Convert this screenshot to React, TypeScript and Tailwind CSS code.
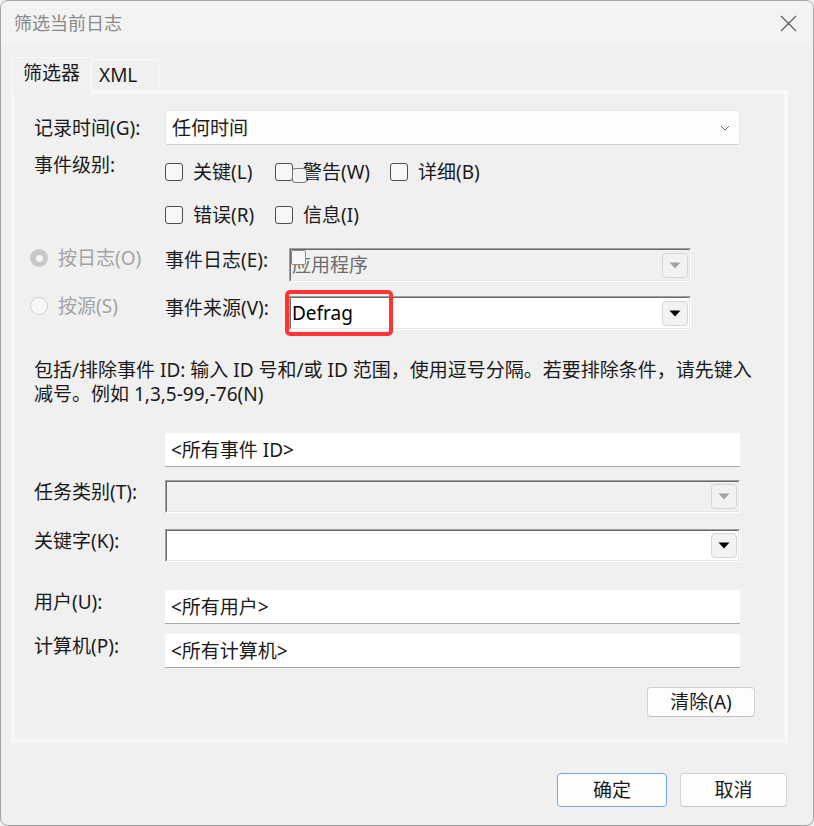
import React from "react";

/** Win32 style sunken combo box (classic 3D border). */
function SunkenCombo({
  value,
  disabled,
  width,
  height,
  children,
}: {
  value?: string;
  disabled?: boolean;
  width: string;
  height: string;
  children?: React.ReactNode;
}) {
  return (
    <div
      className={`relative border-l border-t border-b border-r border-l-[#a0a0a0] border-t-[#a0a0a0] border-r-white border-b-white ${width} ${height}`}
    >
      <div
        className={`flex h-full items-center border-l border-t border-b border-r border-l-[#6a6a6a] border-t-[#6a6a6a] border-r-[#e6e6e6] border-b-[#e6e6e6] ${
          disabled ? "bg-[#f0f0f0]" : "bg-white"
        }`}
      >
        <span
          className={`flex-1 truncate pl-[1px] leading-[24px] ${
            disabled ? "text-[#6d6d6d]" : "text-black"
          }`}
        >
          {value}
        </span>
        <span className="mr-[1px] flex h-[25px] w-[26px] items-center justify-center rounded-[4px] border border-[#d6d6d6] bg-[#f2f2f2]">
          <svg width="12" height="7" viewBox="0 0 12 7">
            <path d="M0.5 0.5h11L6 6.5z" fill={disabled ? "#a3a3a3" : "#000"} />
          </svg>
        </span>
      </div>
      {children}
    </div>
  );
}

function Checkbox({ label, width, children }: { label: string; width: string; children?: React.ReactNode }) {
  return (
    <div className={`relative flex h-[24px] items-center gap-[10px] ${width}`}>
      <span className="h-[18px] w-[18px] shrink-0 rounded-[3px] border border-[#4d4d4d] bg-[#f7f7f7]" />
      <span className="leading-[24px]">{label}</span>
      {children}
    </div>
  );
}

function TextBox({ value }: { value: string }) {
  return (
    <div className="flex h-[34px] w-[575px] items-center border-b border-[#a8a8a8] bg-white pl-[6px] leading-[24px]">
      {value}
    </div>
  );
}

export default function App() {
  return (
    <div className="h-[826px] w-[814px] bg-[#f0f0f0] font-['Noto_Sans','Noto_Sans_CJK_SC',sans-serif] text-[19px] text-[#1a1a1a]">
      <div className="flex h-full w-full flex-col overflow-hidden rounded-[8px] border border-[#a3a3a3]">
        {/* title bar */}
        <div className="flex h-[45px] shrink-0 items-center justify-between bg-[#f3f3f3] pl-[13px] pr-[16px]">
          <span className="text-[18px] text-[#8a8a8a]">筛选当前日志</span>
          <svg width="17" height="17" viewBox="0 0 17 17">
            <path d="M1 1l15 15M16 1L1 16" stroke="#5c5c5c" strokeWidth="1.2" />
          </svg>
        </div>

        {/* tabs */}
        <div className="ml-[10px] mt-[11px] flex h-[33px] items-start">
          <div className="relative z-10 flex h-[37px] w-[81px] items-start justify-center border-l border-r border-t border-[#fafafa] bg-[#f1f1f1] pt-[3px] leading-[24px]">
            筛选器
          </div>
          <div className="mt-[2px] flex h-[31px] w-[67px] items-start border-r border-t border-[#fafafa] bg-[#f0f0f0] pl-[7px] pt-[3px] leading-[24px]">
            XML
          </div>
        </div>

        {/* panel */}
        <div className="ml-[10px] h-[653px] w-[777px] border-4 border-[#f8f8f8] pl-[19px] pt-[16px]">
          <div className="flex h-[35px] items-center">
            <span className="w-[131px] leading-[24px]">记录时间(G):</span>
            <div className="flex h-full w-[575px] items-center justify-between rounded-[3px] border border-[#e6e6e6] border-b-[#cfcfcf] bg-[#fdfdfd] pl-[6px] pr-[9px]">
              <span className="leading-[24px]">任何时间</span>
              <svg width="10" height="6" viewBox="0 0 10 6">
                <path d="M1 1l4 4 4-4" stroke="#6b6b6b" strokeWidth="1" fill="none" />
              </svg>
            </div>
          </div>

          <div className="mt-[8px] flex">
            <span className="w-[131px] leading-[24px]">事件级别:</span>
            <div className="flex flex-col gap-[19px] pt-[7px]">
              <div className="flex">
                <Checkbox label="关键(L)" width="w-[110px]" />
                <Checkbox label="警告(W)" width="w-[115px]">
                  <span className="absolute left-[17px] top-[8px] h-[15px] w-[15px] rounded-[3px] border border-[#7a7a7a] bg-[#f4f4f4]" />
                </Checkbox>
                <Checkbox label="详细(B)" width="w-[110px]" />
              </div>
              <div className="flex">
                <Checkbox label="错误(R)" width="w-[110px]" />
                <Checkbox label="信息(I)" width="w-[115px]" />
              </div>
            </div>
          </div>

          <div className="-ml-[4px] mt-[21px] flex h-[34px] items-start">
            <div className="-mt-[2px] flex h-[24px] w-[135px] items-center gap-[10px] text-[#a3a3a3]">
              <span className="flex h-[18px] w-[18px] items-center justify-center rounded-full bg-[#c8c8c8]">
                <span className="h-[7px] w-[7px] rounded-full bg-[#f4f4f4]" />
              </span>
              <span className="leading-[24px]">按日志(O)</span>
            </div>
            <span className="w-[124px] leading-[24px]">事件日志(E):</span>
            <SunkenCombo value="应用程序" disabled width="w-[402px]" height="h-[34px]">
              <span className="absolute left-[1px] top-[1px] h-[15px] w-[15px] rounded-[2px] border border-[#8a8a8a] bg-[#f7f7f7]" />
            </SunkenCombo>
          </div>

          <div className="-ml-[4px] mt-[14px] flex h-[34px] items-start">
            <div className="-mt-[2px] flex h-[24px] w-[135px] items-center gap-[10px] text-[#a3a3a3]">
              <span className="h-[18px] w-[18px] rounded-full border border-[#cfcfcf] bg-[#f8f8f8]" />
              <span className="leading-[24px]">按源(S)</span>
            </div>
            <span className="w-[124px] leading-[24px]">事件来源(V):</span>
            <SunkenCombo value="Defrag" width="w-[402px]" height="h-[34px]">
              <span className="absolute -left-[5px] -top-[7px] h-[46px] w-[108px] rounded-[5px] border-4 border-[#ff3535]" />
            </SunkenCombo>
          </div>

          <p className="mt-[28px] leading-[24px] text-[#1a1a1a]">
            包括/排除事件 ID: 输入 ID 号和/或 ID 范围，使用逗号分隔。若要排除条件，请先键入
            <br />
            减号。例如 1,3,5-99,-76(N)
          </p>

          <div className="ml-[131px] mt-[27px]">
            <TextBox value="<所有事件 ID>" />
          </div>

          <div className="mt-[13px] flex items-start">
            <span className="w-[131px] leading-[24px]">任务类别(T):</span>
            <SunkenCombo disabled width="w-[575px]" height="h-[33px]" />
          </div>

          <div className="mt-[16px] flex items-start">
            <span className="w-[131px] leading-[24px]">关键字(K):</span>
            <SunkenCombo width="w-[575px]" height="h-[33px]" />
          </div>

          <div className="mt-[28px] flex items-start">
            <span className="w-[131px] leading-[24px]">用户(U):</span>
            <TextBox value="<所有用户>" />
          </div>

          <div className="mt-[10px] flex items-start">
            <span className="w-[131px] leading-[24px]">计算机(P):</span>
            <TextBox value="<所有计算机>" />
          </div>

          <div className="mt-[19px] flex justify-end pr-[29px]">
            <button className="flex h-[30px] w-[108px] items-center justify-center rounded-[4px] border border-[#d0d0d0] border-b-[#c2c2c2] bg-[#fdfdfd] leading-[24px]">
              清除(A)
            </button>
          </div>
        </div>

        {/* footer buttons */}
        <div className="mt-[30px] flex justify-end gap-[13px] pr-[26px]">
          <button className="flex h-[34px] w-[110px] items-center justify-center rounded-[4px] border border-[#6fa9e0] bg-[#fdfdfd] leading-[24px]">
            确定
          </button>
          <button className="flex h-[34px] w-[107px] items-center justify-center rounded-[4px] border border-[#d3d3d3] border-b-[#c4c4c4] bg-[#fdfdfd] leading-[24px]">
            取消
          </button>
        </div>
      </div>
    </div>
  );
}
